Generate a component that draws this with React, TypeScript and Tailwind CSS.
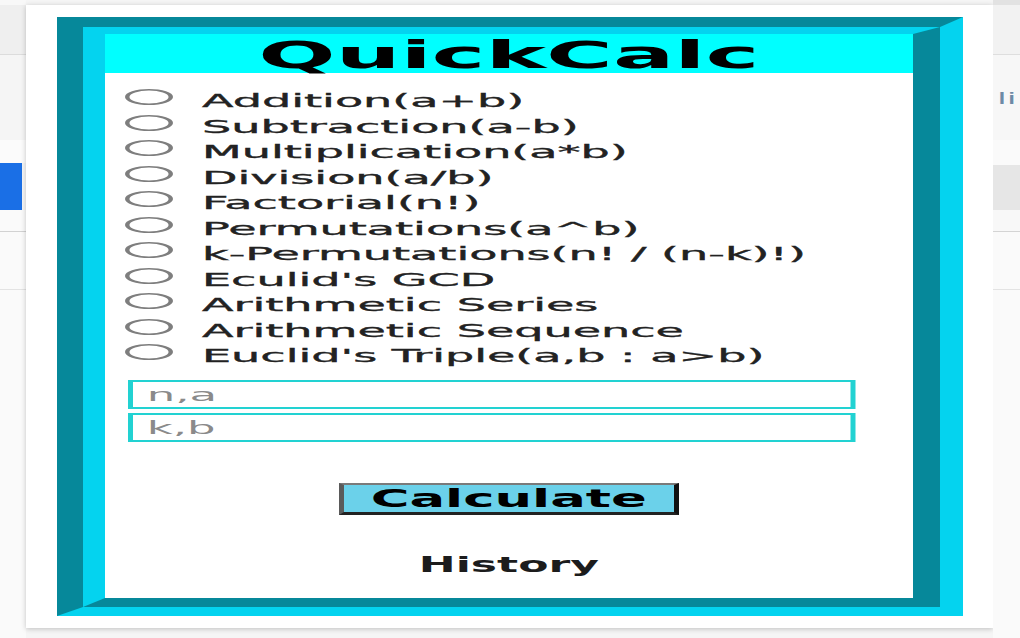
import React, { useState } from "react";

const OPERATIONS = [
  "Addition(a+b)",
  "Subtraction(a-b)",
  "Multiplication(a*b)",
  "Division(a/b)",
  "Factorial(n!)",
  "Permutations(a^b)",
  "k-Permutations(n! / (n-k)!)",
  "Eculid's GCD",
  "Arithmetic Series",
  "Arithmetic Sequence",
  "Euclid's Triple(a,b : a>b)",
];

// stretched radio ring, drawn so the stroke widens on the sides
const Radio: React.FC<{ checked: boolean }> = ({ checked }) => (
  <svg
    viewBox="0 0 13 13"
    preserveAspectRatio="none"
    className="w-[48px] h-[16px] mt-[1px] shrink-0"
  >
    <circle cx="6.5" cy="6.5" r="5.9" fill="white" stroke="#7e7e7e" strokeWidth="1.2" />
    {checked && <circle cx="6.5" cy="6.5" r="3" fill="#333" />}
  </svg>
);

const App: React.FC = () => {
  const [selected, setSelected] = useState<number | null>(null);
  const [first, setFirst] = useState("");
  const [second, setSecond] = useState("");

  return (
    <div className="w-[1020px] h-[638px] flex bg-[#f5f5f5] overflow-hidden font-['DejaVu_Sans',sans-serif]">
      {/* page behind the popup, left edge */}
      <div className="w-[26px] shrink-0 flex flex-col">
        <div className="h-[5px] bg-[#f8f8f8]" />
        <div className="h-[50px] bg-[#efefef] border-b border-[#dcdcdc]" />
        <div className="h-[85px] bg-[#f5f5f5]" />
        <div className="h-[23px] bg-[#fbfbfb]" />
        <div className="h-[47px] w-[22px] bg-[#1a6fe6]" />
        <div className="h-[22px] bg-[#fafafa] border-b border-[#d2d2d2]" />
        <div className="h-[58px] bg-[#fafafa] border-b border-[#e3e3e3]" />
        <div className="flex-1 bg-[#fafafa]" />
      </div>

      {/* popup */}
      <div className="w-[967px] h-[623px] mt-[5px] shrink-0 bg-white shadow-[0_1px_5px_rgba(0,0,0,0.22)] pt-[12px] pl-[31px] pr-[30px] pb-[12px]">
        <div className="h-full border-l-[26px] border-t-[10px] border-r-[23px] border-b-[9px] border-l-[#06889a] border-t-[#06889a] border-r-[#04d3ef] border-b-[#04d3ef]">
          <div className="h-full flex flex-col bg-white border-l-[22px] border-t-[7px] border-r-[27px] border-b-[9px] border-l-[#04d3ef] border-t-[#04d3ef] border-r-[#06889a] border-b-[#06889a]">
            <div className="h-[39px] shrink-0 bg-[#00ffff] text-center pt-[3px]">
              <span className="inline-block scale-x-[2.46] text-[37px] leading-[37px] font-bold text-black">
                QuickCalc
              </span>
            </div>

            <div className="pt-[15px] pl-[20px] flex flex-col">
              {OPERATIONS.map((op, i) => (
                <label
                  key={op}
                  onClick={() => setSelected(i)}
                  className="flex items-start h-[25.5px] cursor-pointer"
                >
                  <Radio checked={selected === i} />
                  <span className="ml-[29px] inline-block origin-left scale-x-[2.56] whitespace-nowrap text-[18px] leading-[25.5px] text-[#222] [-webkit-text-stroke:0.35px_#222]">
                    {op}
                  </span>
                </label>
              ))}
            </div>

            <div className="mt-[11.5px] ml-[23px] flex flex-col gap-[4px]">
              <input
                value={first}
                onChange={(e) => setFirst(e.target.value)}
                placeholder="n,a"
                className="w-[290.8px] h-[29px] origin-left scale-x-[2.5] border-2 border-[#22d2d2] pl-[5.5px] text-[18px] text-[#262626] placeholder:text-[#8a8a8a] outline-none"
              />
              <input
                value={second}
                onChange={(e) => setSecond(e.target.value)}
                placeholder="k,b"
                className="w-[290.8px] h-[29px] origin-left scale-x-[2.5] border-2 border-[#22d2d2] pl-[5.5px] text-[18px] text-[#262626] placeholder:text-[#8a8a8a] outline-none"
              />
            </div>

            <button className="mt-[41px] self-center w-[340px] h-[32px] flex items-center justify-center pt-[2px] bg-[#6bd1ea] border-l-[5px] border-t-2 border-r-[5px] border-b-[3px] border-l-[#5a5a5a] border-t-[#7a7a7a] border-r-[#111] border-b-[#222]">
              <span className="inline-block scale-x-[2.2] text-[24px] leading-[27px] font-bold text-black">
                Calculate
              </span>
            </button>

            <div className="mt-[38px] text-center">
              <span className="inline-block scale-x-[2.1] text-[21px] leading-[24px] font-bold text-[#1c1c1c]">
                History
              </span>
            </div>
          </div>
        </div>
      </div>

      {/* page behind the popup, right edge */}
      <div className="flex-1 flex flex-col">
        <div className="h-[5px] bg-[#e2e2e2]" />
        <div className="h-[50px] bg-[#f2f2f2] border-b border-[#dedede]" />
        <div className="h-[85px] bg-[#f7f7f7] pl-[4px] pt-[32px]">
          <span className="inline-block origin-left scale-x-[2.2] text-[16px] leading-[18px] text-[#6e8aa6]">
            li
          </span>
        </div>
        <div className="h-[25px] bg-[#fafafa]" />
        <div className="h-[45px] bg-[#e6e6e6]" />
        <div className="h-[22px] bg-[#f8f8f8] border-b border-[#d4d4d4]" />
        <div className="h-[58px] bg-[#fafafa] border-b border-[#e3e3e3]" />
        <div className="flex-1 bg-[#fafafa]" />
      </div>
    </div>
  );
};

export default App;
